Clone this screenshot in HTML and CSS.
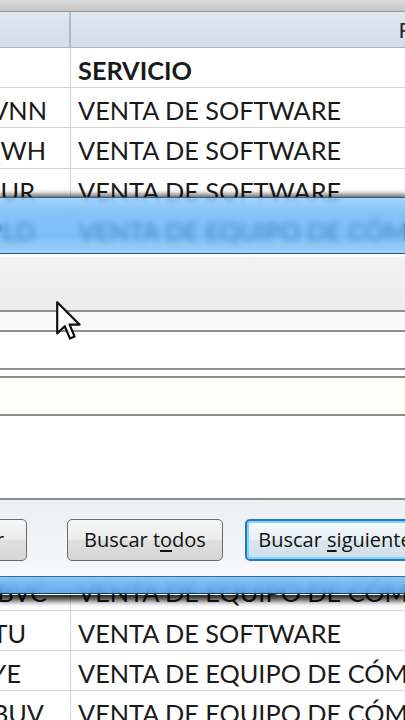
FILE: index.html
```html
<!DOCTYPE html>
<html lang="es">
<head>
<meta charset="utf-8">
<title>Buscar y reemplazar</title>
<link rel="stylesheet" href="styles.css">
</head>
<body>
<div class="sheet">
  <div class="topbar"></div>
  <div class="colhead">
    <div class="ch ch-a"></div>
    <div class="ch ch-b"><span class="ch-label">F</span></div>
  </div>
  <div class="row"><div class="c1"></div><div class="c2 bold">SERVICIO</div></div>
  <div class="row"><div class="c1 e23">KLWVNN</div><div class="c2">VENTA DE SOFTWARE</div></div>
  <div class="row"><div class="c1 e24">JRQWH</div><div class="c2">VENTA DE SOFTWARE</div></div>
  <div class="row"><div class="c1 e35">XTBUR</div><div class="c2">VENTA DE SOFTWARE</div></div>
  <div class="row"><div class="c1 e35">MKPLD</div><div class="c2">VENTA DE EQUIPO DE CÓMPUTO</div></div>
  <div class="row"><div class="c1 e23">PLQRS</div><div class="c2">VENTA DE SOFTWARE</div></div>
  <div class="row"><div class="c1 e23">ZNMAW</div><div class="c2">VENTA DE SOFTWARE</div></div>
  <div class="row"><div class="c1 e23">HYTRE</div><div class="c2">VENTA DE EQUIPO DE CÓMPUTO</div></div>
  <div class="row"><div class="c1 e23">QWERT</div><div class="c2">VENTA DE SOFTWARE</div></div>
  <div class="row"><div class="c1 e23">ASDFG</div><div class="c2">VENTA DE SOFTWARE</div></div>
  <div class="row"><div class="c1 e23">ZXCVB</div><div class="c2">VENTA DE EQUIPO DE CÓMPUTO</div></div>
  <div class="row"><div class="c1 e23">POIUY</div><div class="c2">VENTA DE SOFTWARE</div></div>
  <div class="row"><div class="c1 e23">LKJHG</div><div class="c2">VENTA DE SOFTWARE</div></div>
  <div class="row"><div class="c1 e23">MNBVC</div><div class="c2">VENTA DE EQUIPO DE CÓMPUTO</div></div>
  <div class="row"><div class="c1 e44">RWTU</div><div class="c2">VENTA DE SOFTWARE</div></div>
  <div class="row"><div class="c1 e49">GHYE</div><div class="c2">VENTA DE EQUIPO DE CÓMPUTO</div></div>
  <div class="row"><div class="c1 e26">PCBUV</div><div class="c2">VENTA DE EQUIPO DE CÓMPUTO</div></div>
</div>

<div class="dialog">
  <div class="titlebar"></div>
  <div class="dlg-body">
    <div class="highlight"></div>
    <div class="tabs"></div>
    <div class="field field-a"></div>
    <div class="field field-b"></div>
    <div class="field field-gap"></div>
    <div class="field field-c"></div>
    <div class="field field-d"></div>
    <div class="actions">
      <button class="btn btn-replace">Reemplazar</button>
      <button class="btn btn-all">Buscar t<u>o</u>dos</button>
      <button class="btn btn-next">Buscar <u>s</u>iguiente</button>
    </div>
  </div>
  <div class="frame-bottom"></div>
</div>

<svg class="cursor" width="26" height="40" viewBox="0 0 13 20" aria-hidden="true">
  <path d="M0.6 0.6 L0.6 16.2 L4.4 12.6 L7 18.8 L9.3 17.8 L6.8 11.8 L11.8 11.8 Z" fill="#ffffff" stroke="#111111" stroke-width="1.1" stroke-linejoin="round"/>
</svg>
</body>
</html>
```

FILE: styles.css
```css
* { box-sizing: border-box; }

html, body {
  margin: 0;
  padding: 0;
  width: 405px;
  height: 720px;
  overflow: hidden;
  background: #ffffff;
}

body {
  position: relative;
  font-family: Lato, "Open Sans", sans-serif;
  color: #1a1a1a;
}

.sheet {
  display: flex;
  flex-direction: column;
}

.topbar {
  height: 12px;
  background: linear-gradient(#dadada, #c4c4c4);
  border-bottom: 1px solid #9a9a9a;
}

.colhead {
  display: flex;
  height: 36px;
  background: linear-gradient(#dfe7ef, #d2dde8);
  border-bottom: 1px solid #a4b6c8;
}

.ch { height: 100%; }

.ch-a {
  width: 71px;
  border-right: 2px solid #a9bbcc;
}

.ch-b {
  flex: 1;
  display: flex;
  align-items: center;
  justify-content: flex-end;
  overflow: hidden;
}

.ch-label {
  font-size: 22px;
  color: #2a2a2a;
  margin-right: -6px;
}

.row {
  display: flex;
  height: 40.2px;
  border-bottom: 1px solid #d6d6d6;
  font-size: 25.3px;
  line-height: 40px;
  white-space: nowrap;
}

.c1 {
  width: 71px;
  flex: none;
  display: flex;
  justify-content: flex-end;
  overflow: hidden;
  border-right: 1px solid #d2d6dc;
  padding-top: 2px;
}

.c2 {
  flex: 1;
  overflow: hidden;
  padding-left: 7px;
  padding-top: 2px;
}

.bold { font-weight: 700; }

.e23 { padding-right: 23px; }
.e24 { padding-right: 24px; }
.e26 { padding-right: 26px; }
.e35 { padding-right: 35px; }
.e44 { padding-right: 44px; }
.e49 { padding-right: 49px; }

/* Find / replace dialog over the sheet */
.dialog {
  position: absolute;
  top: 197px;
  left: 0;
  right: 0;
  height: 398px;
  display: flex;
  flex-direction: column;
  box-shadow: 0 -1px 5px 2px rgba(0, 0, 0, 0.55), 0 5px 6px 1px rgba(0, 0, 0, 0.75);
}

.titlebar {
  height: 57px;
  border-top: 1px solid #3b5d80;
  border-bottom: 1px solid #2c5478;
  background: linear-gradient(rgba(140, 202, 252, 0.8) 0%, rgba(92, 176, 246, 0.76) 30%, rgba(84, 170, 244, 0.76) 70%, rgba(134, 200, 250, 0.8) 100%);
  backdrop-filter: blur(3px);
}

.dlg-body {
  display: flex;
  flex-direction: column;
  flex: none;
}

.highlight {
  height: 3px;
  background: #fbfcfd;
}

.tabs {
  height: 55px;
  background: linear-gradient(#f2f2f2, #ebebeb);
  border-bottom: 2px solid #8c8c8c;
}

.field {
  border-bottom: 2px solid #8d8d8d;
}

.field-a { height: 20px; background: #f9f9f9; }
.field-b { height: 38px; background: #ffffff; }
.field-gap { height: 8px; background: #ffffff; }
.field-c { height: 38px; background: #fffffa; }
.field-d { height: 84px; background: #ffffff; }

.actions {
  height: 76px;
  display: flex;
  align-items: flex-start;
  gap: 22px;
  padding-top: 19px;
  margin-left: -129px;
  background: linear-gradient(#eceff3, #f6f8fa);
}

.btn {
  flex: none;
  height: 42px;
  border: 1.5px solid #6a6a6a;
  border-radius: 5px;
  background: linear-gradient(#f6f6f6 0%, #ececec 48%, #dedede 52%, #d6d6d6 100%);
  font-family: "Open Sans", "Noto Sans", sans-serif;
  font-size: 20px;
  color: #111111;
  padding: 0;
  line-height: 38px;
}

.btn u { text-underline-offset: 3px; }

.btn-replace { width: 156px; margin-right: 18px; }
.btn-all { width: 156px; }
.btn-next {
  width: 180px;
  border: 2px solid #2a78bf;
  box-shadow: inset 0 0 0 2px #7fd3f7;
  background: linear-gradient(#f4f9fc 0%, #e8f1f7 48%, #d9e6ef 52%, #d2e0ea 100%);
}

.frame-bottom {
  height: 18px;
  border-top: 1px solid #3e6a92;
  border-bottom: 1px solid #1f3850;
  background: linear-gradient(rgba(120, 190, 245, 0.88), rgba(80, 160, 235, 0.88));
  backdrop-filter: blur(3px);
}

.cursor {
  position: absolute;
  left: 56px;
  top: 301px;
}
```
